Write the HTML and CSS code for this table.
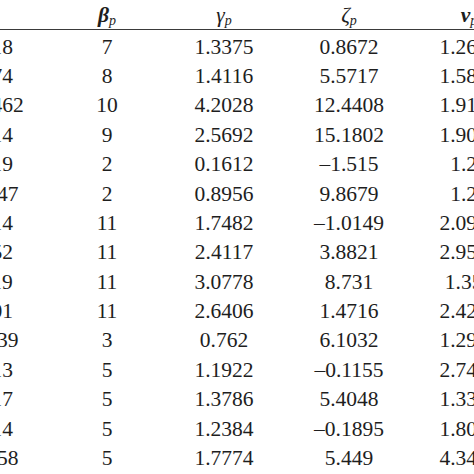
FILE: index.html
```html
<!DOCTYPE html>
<html>
<head>
<meta charset="utf-8">
<link rel="stylesheet" href="styles.css">
</head>
<body>
<div class="frame">
<table class="data">
<colgroup>
<col class="c0"><col class="c1"><col class="c2"><col class="c3"><col class="c4">
</colgroup>
<thead>
<tr><th></th><th><b><i>β</i></b><sub><i>p</i></sub></th><th><i>γ<sub>p</sub></i></th><th><i>ζ<sub>p</sub></i></th><th><b><i>ν</i></b><sub><i>p</i></sub></th></tr>
</thead>
<tbody>
<tr><td>0.4318</td><td>7</td><td>1.3375</td><td>0.8672</td><td>1.2658</td></tr>
<tr><td>0.9274</td><td>8</td><td>1.4116</td><td>5.5717</td><td>1.5821</td></tr>
<tr><td>–10.9462</td><td>10</td><td>4.2028</td><td>12.4408</td><td>1.9135</td></tr>
<tr><td>0.2314</td><td>9</td><td>2.5692</td><td>15.1802</td><td>1.9047</td></tr>
<tr><td>1.0219</td><td>2</td><td>0.1612</td><td>–1.515</td><td>1.25</td></tr>
<tr><td>10.3347</td><td>2</td><td>0.8956</td><td>9.8679</td><td>1.28</td></tr>
<tr><td>0.4414</td><td>11</td><td>1.7482</td><td>–1.0149</td><td>2.0936</td></tr>
<tr><td>1.1052</td><td>11</td><td>2.4117</td><td>3.8821</td><td>2.9514</td></tr>
<tr><td>0.9119</td><td>11</td><td>3.0778</td><td>8.731</td><td>1.352</td></tr>
<tr><td>1.5301</td><td>11</td><td>2.6406</td><td>1.4716</td><td>2.4273</td></tr>
<tr><td>12.3339</td><td>3</td><td>0.762</td><td>6.1032</td><td>1.2961</td></tr>
<tr><td>0.8913</td><td>5</td><td>1.1922</td><td>–0.1155</td><td>2.7448</td></tr>
<tr><td>1.1017</td><td>5</td><td>1.3786</td><td>5.4048</td><td>1.3372</td></tr>
<tr><td>0.7414</td><td>5</td><td>1.2384</td><td>–0.1895</td><td>1.8016</td></tr>
<tr><td>10.2358</td><td>5</td><td>1.7774</td><td>5.449</td><td>4.3417</td></tr>
</tbody>
</table>
</div>
</body>
</html>
```
FILE: styles.css
```css
html, body {
  margin: 0;
  padding: 0;
  background: #ffffff;
}
.frame {
  width: 474px;
  height: 474px;
  overflow: hidden;
}
.data {
  margin-left: -76px;
  border-collapse: collapse;
  table-layout: fixed;
  width: 593px;
  font-family: "Liberation Serif", "DejaVu Serif", serif;
  font-size: 21.5px;
  color: #1e1e1e;
}
.c0 { width: 119px; }
.c1 { width: 128px; }
.c2 { width: 106px; }
.c3 { width: 144px; }
.c4 { width: 96px; }
.data th {
  font-weight: normal;
  height: 29px;
  padding: 0;
  text-align: center;
  vertical-align: middle;
  border-bottom: 1px solid #3a3a3a;
  line-height: 20px;
}
.data th sub {
  font-size: 14px;
  vertical-align: -3px;
  line-height: 0;
}
.data td {
  padding: 6.7px 0 2.7px;
  text-align: center;
  vertical-align: middle;
  line-height: 20px;
}
```
